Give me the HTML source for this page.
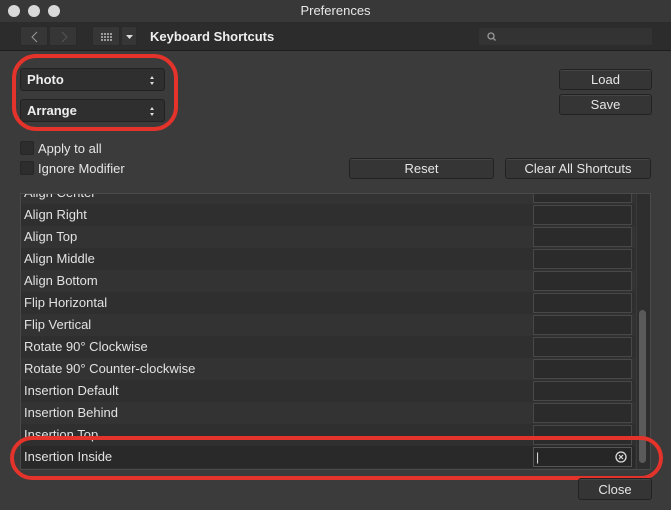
<!DOCTYPE html>
<html><head><meta charset="utf-8"><style>
*{box-sizing:border-box;margin:0;padding:0}
body{width:671px;height:510px;background:#3b3b3b;font-family:"Liberation Sans",sans-serif;color:#e6e6e6;position:relative;overflow:hidden;font-size:12px}
.abs{position:absolute}
.title{left:0;top:0;width:671px;height:22px;background:#383838;text-align:center;line-height:21px;font-size:13px;color:#e8e8e8}
.dot{width:12px;height:12px;border-radius:50%;background:#d9d9d9;top:5px}
.tool{left:0;top:22px;width:671px;height:29px;background:#2c2c2c;border-bottom:1px solid #1e1e1e}
.tb{background:#363636;border:1px solid #2a2a2a;height:20px;top:4px}
.btn{background:#353535;border:1px solid #222;border-radius:3px;text-align:center;font-size:13px;color:#e6e6e6;box-shadow:inset 0 1px 0 #454545}
.pop{background:#2f2f2f;border:1px solid #222;border-radius:3px;font-size:13px;padding-left:6px;line-height:22px;font-weight:bold;color:#eee}
.chk{width:14px;height:14px;background:#2d2d2d;border:1px solid #262626;border-radius:2px}
.list{left:20px;top:193px;width:631px;height:277px;background:#303030;border:1px solid #4a4a4a;overflow:hidden}
.row{position:absolute;left:0;width:614px;height:22px;line-height:22px;padding-left:3px;font-size:13px;color:#e2e2e2}
.sc{position:absolute;left:512px;top:1px;width:99px;height:20px;background:#2b2b2b;border:1px solid #484848}
.oval{border:4px solid #e3332b}
.ar{position:absolute;right:9px;top:6px}
</style></head><body>
<div class="abs title">Preferences</div>
<div class="abs dot" style="left:8px"></div>
<div class="abs dot" style="left:28px"></div>
<div class="abs dot" style="left:48px"></div>
<div class="abs tool">
 <div class="abs tb" style="left:20px;width:28px"><svg width="28" height="20"><path d="M16 5l-5 5 5 5" stroke="#999" fill="none"/></svg></div>
 <div class="abs tb" style="left:49px;width:28px"><svg width="28" height="20"><path d="M12 5l5 5-5 5" stroke="#555" fill="none"/></svg></div>
 <div class="abs tb" style="left:92px;width:28px"><svg width="28" height="20"><g fill="#bbb"><circle cx="9" cy="7" r="1"/><circle cx="12" cy="7" r="1"/><circle cx="15" cy="7" r="1"/><circle cx="18" cy="7" r="1"/><circle cx="9" cy="10" r="1"/><circle cx="12" cy="10" r="1"/><circle cx="15" cy="10" r="1"/><circle cx="18" cy="10" r="1"/><circle cx="9" cy="13" r="1"/><circle cx="12" cy="13" r="1"/><circle cx="15" cy="13" r="1"/><circle cx="18" cy="13" r="1"/></g></svg></div>
 <div class="abs tb" style="left:121px;width:16px"><svg width="16" height="20"><path d="M4 8h7l-3.5 4z" fill="#ddd"/></svg></div>
 <div class="abs" style="left:150px;top:7px;font-size:13px;font-weight:bold;color:#eee">Keyboard Shortcuts</div>
 <div class="abs" style="left:479px;top:6px;width:173px;height:17px;background:#333;border-radius:2px"><svg width="16" height="17" style="position:absolute;left:5px;top:0"><circle cx="7" cy="8" r="3" stroke="#999" stroke-width="1.3" fill="none"/><path d="M9 10l2.5 2.5" stroke="#999" stroke-width="1.3"/></svg></div>
</div>
<div class="abs pop" style="left:20px;top:68px;width:145px;height:23px">Photo<svg class="ar" width="6" height="11"><path d="M1 4l2-3 2 3zM1 7l2 3 2-3z" fill="#ddd"/></svg></div>
<div class="abs pop" style="left:20px;top:99px;width:145px;height:23px">Arrange<svg class="ar" width="6" height="11"><path d="M1 4l2-3 2 3zM1 7l2 3 2-3z" fill="#ddd"/></svg></div>
<div class="abs oval" style="left:12px;top:54px;width:166px;height:77px;border-radius:24px"></div>
<div class="abs btn" style="left:559px;top:69px;width:93px;height:21px;line-height:19px">Load</div>
<div class="abs btn" style="left:559px;top:94px;width:93px;height:21px;line-height:19px">Save</div>
<div class="abs chk" style="left:20px;top:141px"></div>
<div class="abs" style="left:38px;top:141px;font-size:13px">Apply to all</div>
<div class="abs chk" style="left:20px;top:161px"></div>
<div class="abs" style="left:38px;top:161px;font-size:13px">Ignore Modifier</div>
<div class="abs btn" style="left:349px;top:158px;width:145px;height:21px;line-height:19px">Reset</div>
<div class="abs btn" style="left:505px;top:158px;width:146px;height:21px;line-height:19px">Clear All Shortcuts</div>
<div class="abs list">
 <div class="row" style="top:-12px;background:#333">Align Center<div class="sc"></div></div>
 <div class="row" style="top:10px;background:#2f2f2f">Align Right<div class="sc"></div></div>
 <div class="row" style="top:32px;background:#333">Align Top<div class="sc"></div></div>
 <div class="row" style="top:54px;background:#2f2f2f">Align Middle<div class="sc"></div></div>
 <div class="row" style="top:76px;background:#333">Align Bottom<div class="sc"></div></div>
 <div class="row" style="top:98px;background:#2f2f2f">Flip Horizontal<div class="sc"></div></div>
 <div class="row" style="top:120px;background:#333">Flip Vertical<div class="sc"></div></div>
 <div class="row" style="top:142px;background:#2f2f2f">Rotate 90° Clockwise<div class="sc"></div></div>
 <div class="row" style="top:164px;background:#333">Rotate 90° Counter-clockwise<div class="sc"></div></div>
 <div class="row" style="top:186px;background:#2f2f2f">Insertion Default<div class="sc"></div></div>
 <div class="row" style="top:208px;background:#333">Insertion Behind<div class="sc"></div></div>
 <div class="row" style="top:230px;background:#2f2f2f">Insertion Top<div class="sc"></div></div>
 <div class="row" style="top:252px;background:#292929">Insertion Inside<div class="sc" style="background:#262626;border-color:#555"><span style="position:absolute;left:2px;top:-2px;font-size:12px">|</span><svg width="14" height="14" style="position:absolute;right:3px;top:2px"><circle cx="7" cy="7" r="5" stroke="#ddd" stroke-width="1.3" fill="none"/><path d="M5 5l4 4M9 5l-4 4" stroke="#ddd" stroke-width="1.2"/></svg></div></div>
 <div class="abs" style="left:615px;top:0;width:15px;height:277px;background:#2e2e2e;border-left:1px solid #3a3a3a"></div>
 <div class="abs" style="left:618px;top:116px;width:7px;height:153px;background:#5a5a5a;border-radius:4px"></div>
</div>
<div class="abs oval" style="left:10px;top:436px;width:653px;height:44px;border-radius:22px"></div>
<div class="abs btn" style="left:578px;top:478px;width:74px;height:22px;line-height:21px">Close</div>
</body></html>
